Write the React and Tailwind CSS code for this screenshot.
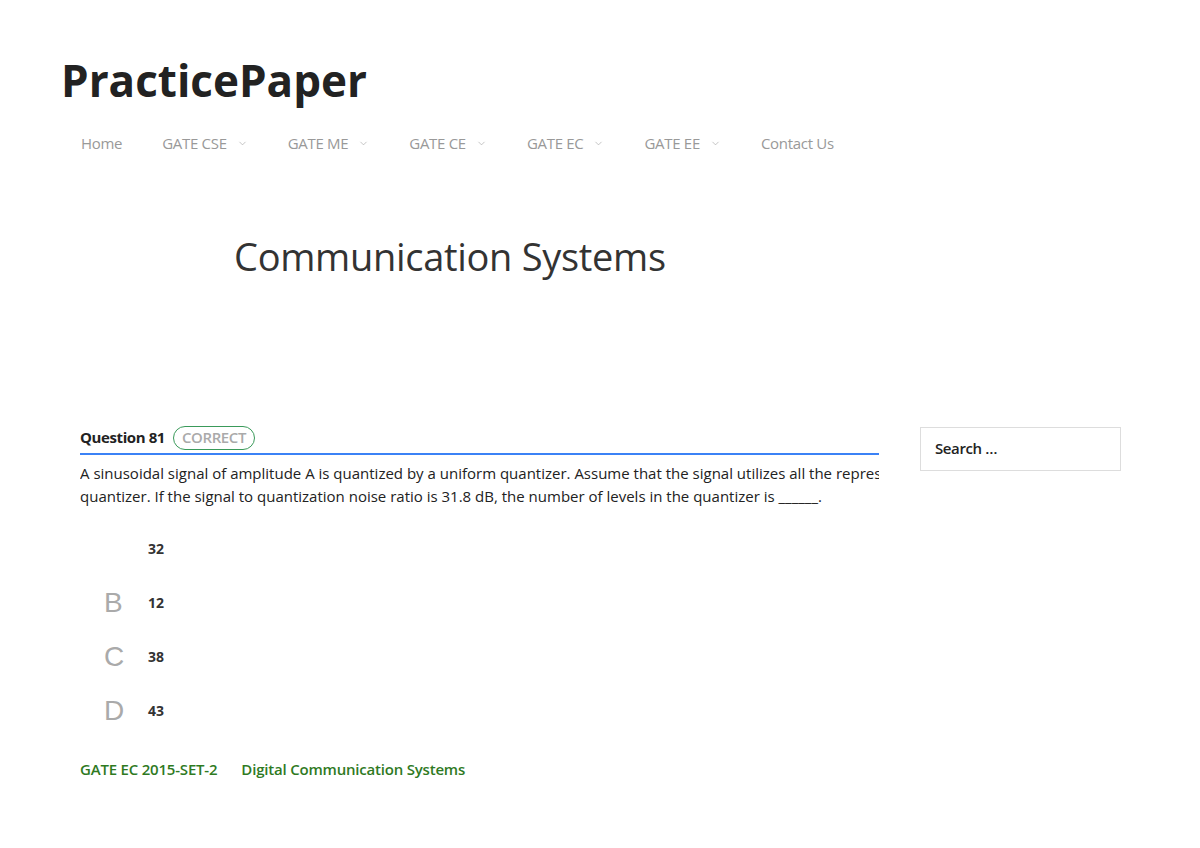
import { ChevronDown } from "lucide-react";

const navItems = [
  { label: "Home", menu: false },
  { label: "GATE CSE", menu: true },
  { label: "GATE ME", menu: true },
  { label: "GATE CE", menu: true },
  { label: "GATE EC", menu: true },
  { label: "GATE EE", menu: true },
  { label: "Contact Us", menu: false },
];

const options = [
  { letter: "", value: "32" },
  { letter: "B", value: "12" },
  { letter: "C", value: "38" },
  { letter: "D", value: "43" },
];

export default function App() {
  return (
    <div
      className="w-[1200px] h-[848px] bg-white overflow-hidden text-[#333]"
      style={{ fontFamily: '"Open Sans", "Liberation Sans", sans-serif' }}
    >
      {/* Header */}
      <header className="pl-[61px] pt-[50px]">
        <h1 className="text-[44px] leading-[60px] font-bold text-[#222] tracking-[0px]">PracticePaper</h1>
        <nav className="flex items-center gap-[40px] pl-[20px] mt-[22px] text-[15px] text-[#999] tracking-[-0.3px]">
          {navItems.map((item) => (
            <div key={item.label} className="flex items-center gap-[10px]">
              <span>{item.label}</span>
              {item.menu && <ChevronDown size={11} strokeWidth={1.5} className="text-[#aaa]" />}
            </div>
          ))}
        </nav>
      </header>

      {/* Page title */}
      <div className="pl-[234px] mt-[75px]">
        <h2 className="text-[38px] leading-[52px] font-normal text-[#333] tracking-[-0.3px]">Communication Systems</h2>
      </div>

      {/* Main */}
      <div className="flex gap-[41px] pl-[80px] mt-[144px]">
        <div className="w-[799px]">
          <div className="flex items-center gap-[8px] pb-[3px] border-b-2 border-[#3b82f6]">
            <span className="text-[15px] font-bold text-[#222] tracking-[-0.4px]">Question 81</span>
            <span className="border border-[#3a9a5a] rounded-full px-[8px] h-[24px] flex items-center text-[15px] font-semibold text-[#aaa] tracking-[-0.4px]">
              CORRECT
            </span>
          </div>
          <div className="mt-[7px] overflow-hidden text-[15px] leading-[23px] font-medium text-[#222] tracking-[0px]">
            <p className="whitespace-nowrap">
              A sinusoidal signal of amplitude A is quantized by a uniform quantizer. Assume that the signal utilizes all the representation levels of the
            </p>
            <p className="whitespace-nowrap">
              quantizer. If the signal to quantization noise ratio is 31.8 dB, the number of levels in the quantizer is ______.
            </p>
          </div>

          <div className="mt-[14px] flex flex-col">
            {options.map((o) => (
              <div key={o.value} className="flex items-center h-[54px]">
                <span
                  className="w-[68px] pl-[24px] text-[28px] text-[#aaa] font-normal"
                  style={{ fontFamily: '"Liberation Sans", Arial, sans-serif' }}
                >
                  {o.letter}
                </span>
                <span className="text-[14px] font-bold text-[#333]">{o.value}</span>
              </div>
            ))}
          </div>

          <div className="mt-[20px] flex gap-[24px] text-[15px] font-semibold text-[#2f7a1f] tracking-[-0.2px]">
            <span>GATE EC 2015-SET-2</span>
            <span>Digital Communication Systems</span>
          </div>
        </div>

        {/* Sidebar */}
        <aside className="w-[201px]">
          <div className="mt-[1px] h-[44px] border border-[#ddd] flex items-center px-[14px] text-[15px] font-semibold text-[#222] tracking-[-0.4px]">
            Search …
          </div>
        </aside>
      </div>
    </div>
  );
}
